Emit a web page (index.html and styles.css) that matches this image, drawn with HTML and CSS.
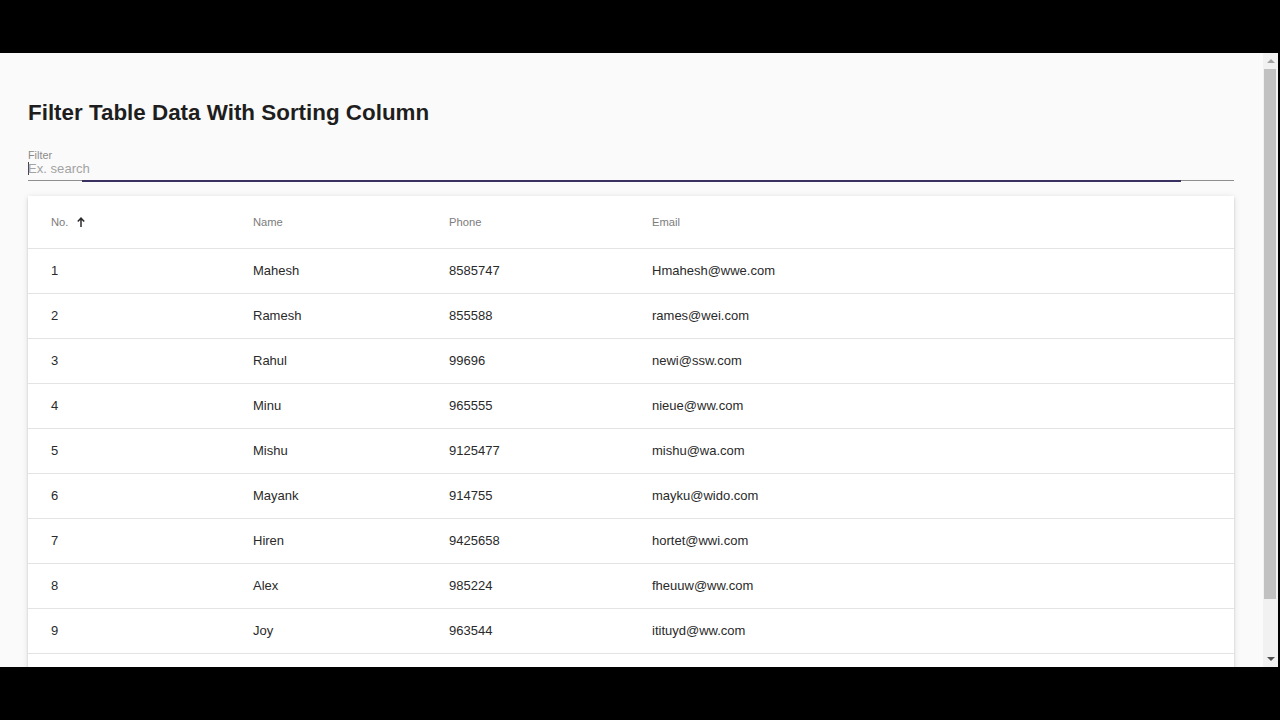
FILE: index.html
```html
<!DOCTYPE html>
<html>
<head>
<meta charset="utf-8">
<title>Filter Table Data With Sorting Column</title>
<link rel="stylesheet" href="styles.css">
</head>
<body>
<div class="letterbox-top"></div>
<div class="screen">
  <main class="page">
    <h1 class="title">Filter Table Data With Sorting Column</h1>
    <div class="field">
      <label class="field-label">Filter</label>
      <div class="field-input"><span class="caret"></span><span class="placeholder">Ex. search</span></div>
    </div>
    <div class="card">
      <table class="data">
        <colgroup>
          <col class="c-no"><col class="c-name"><col class="c-phone"><col class="c-email">
        </colgroup>
        <thead>
          <tr>
            <th class="first">No.<svg class="sort" width="8" height="10" viewBox="0 0 8 10"><path d="M4 10V1.5M0.8 4.5L4 1.2L7.2 4.5" fill="none" stroke="#2b2b2b" stroke-width="1.5"/></svg></th>
            <th>Name</th>
            <th>Phone</th>
            <th>Email</th>
          </tr>
        </thead>
        <tbody>
          <tr><td class="first">1</td><td>Mahesh</td><td>8585747</td><td>Hmahesh@wwe.com</td></tr>
          <tr><td class="first">2</td><td>Ramesh</td><td>855588</td><td>rames@wei.com</td></tr>
          <tr><td class="first">3</td><td>Rahul</td><td>99696</td><td>newi@ssw.com</td></tr>
          <tr><td class="first">4</td><td>Minu</td><td>965555</td><td>nieue@ww.com</td></tr>
          <tr><td class="first">5</td><td>Mishu</td><td>9125477</td><td>mishu@wa.com</td></tr>
          <tr><td class="first">6</td><td>Mayank</td><td>914755</td><td>mayku@wido.com</td></tr>
          <tr><td class="first">7</td><td>Hiren</td><td>9425658</td><td>hortet@wwi.com</td></tr>
          <tr><td class="first">8</td><td>Alex</td><td>985224</td><td>fheuuw@ww.com</td></tr>
          <tr><td class="first">9</td><td>Joy</td><td>963544</td><td>itituyd@ww.com</td></tr>
          <tr class="spacer"><td class="first"></td><td></td><td></td><td></td></tr>
        </tbody>
      </table>
    </div>
  </main>
  <div class="scrollbar">
    <div class="sb-btn"><span class="tri-up"></span></div>
    <div class="sb-track"><div class="sb-thumb"></div></div>
    <div class="sb-btn"><span class="tri-down"></span></div>
  </div>
  <div class="edge"></div>
</div>
</body>
</html>
```

FILE: styles.css
```css
* { box-sizing: border-box; }

html, body {
  margin: 0;
  padding: 0;
  background: #000;
  height: 720px;
  overflow: hidden;
  font-family: "Liberation Sans", Arial, sans-serif;
}

.letterbox-top { height: 53px; background: #000; }

.screen {
  height: 614px;
  display: flex;
  background: #fafafa;
}

.page {
  flex: 1;
  overflow: hidden;
  background: #fafafa;
  padding: 47px 29px 0 28px;
}

.title {
  margin: 0;
  font-size: 22.4px;
  line-height: 26px;
  font-weight: bold;
  color: #1e1e1e;
}

.field { margin-top: 24px; }

.field-label {
  display: block;
  font-size: 10.8px;
  line-height: 11px;
  color: #8a8a8a;
}

.field-input {
  position: relative;
  display: flex;
  align-items: center;
  height: 20px;
  padding-bottom: 4px;
  border-bottom: 1px solid #8e8e8e;
  font-size: 13.1px;
  line-height: 15px;
}

.field-input::after {
  content: "";
  position: absolute;
  left: 54px;
  right: 53px;
  bottom: -2px;
  height: 2px;
  background: #3b3160;
}

.caret {
  width: 1px;
  height: 13px;
  background: #444;
}

.placeholder { color: #a3a3a3; margin-left: -1px; }

.card {
  margin-top: 15px;
  background: #fff;
  box-shadow: 0 3px 1px -2px rgba(0,0,0,.2), 0 2px 2px 0 rgba(0,0,0,.14), 0 1px 6px 0 rgba(0,0,0,.12);
}

.data {
  width: 100%;
  border-collapse: collapse;
  table-layout: fixed;
}

.c-no { width: 225px; }
.c-name { width: 196px; }
.c-phone { width: 203px; }

.data th {
  height: 52px;
  padding: 0;
  text-align: left;
  font-weight: normal;
  font-size: 11.2px;
  color: #7c7c7c;
  border-bottom: 1px solid #e3e3e3;
  vertical-align: middle;
}

.data td {
  height: 45px;
  padding: 0;
  font-size: 13px;
  color: #2a2a2a;
  border-bottom: 1px solid #e3e3e3;
  vertical-align: middle;
}

.data .first { padding-left: 23px; }

.sort {
  margin-left: 9px;
  vertical-align: -1px;
}

.scrollbar {
  width: 15px;
  display: flex;
  flex-direction: column;
  background: #f1f1f1;
}

.sb-btn {
  height: 16px;
  display: flex;
  align-items: center;
  justify-content: center;
}

.sb-track {
  flex: 1;
  padding: 0 2px 0 1px;
}

.sb-thumb {
  height: 530px;
  background: #c1c1c1;
}

.tri-up {
  width: 0; height: 0;
  border-left: 4px solid transparent;
  border-right: 4px solid transparent;
  border-bottom: 4px solid #a3a3a3;
}

.tri-down {
  width: 0; height: 0;
  border-left: 4px solid transparent;
  border-right: 4px solid transparent;
  border-top: 4px solid #505050;
}

.edge { width: 2px; background: #000; }
```
